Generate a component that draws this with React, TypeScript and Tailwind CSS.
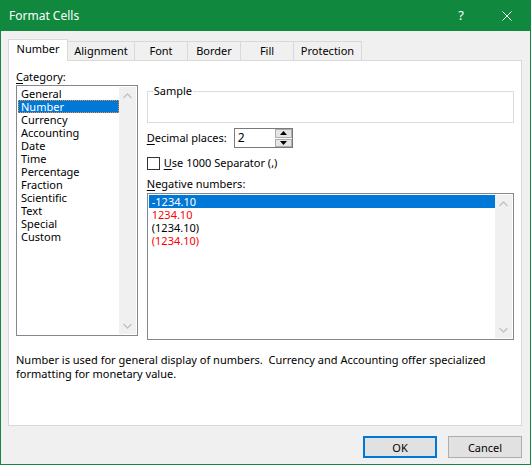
import React from 'react';

const categories = [
  'General',
  'Number',
  'Currency',
  'Accounting',
  'Date',
  'Time',
  'Percentage',
  'Fraction',
  'Scientific',
  'Text',
  'Special',
  'Custom',
];

const negatives = [
  { label: '-1234.10', red: false },
  { label: '1234.10', red: true },
  { label: '(1234.10)', red: false },
  { label: '(1234.10)', red: true },
];

const tabs = [
  { name: 'Number', w: 'w-[60px]' },
  { name: 'Alignment', w: 'w-[68px]' },
  { name: 'Font', w: 'w-[54px]' },
  { name: 'Border', w: 'w-[54px]' },
  { name: 'Fill', w: 'w-[54px]' },
  { name: 'Protection', w: 'w-[69px]' },
];

const Chevron: React.FC<{ down?: boolean }> = ({ down }) => (
  <svg width="9" height="6" viewBox="0 0 9 6" className="block">
    <path
      d={down ? 'M0.5 1 L4.5 5 L8.5 1' : 'M0.5 5 L4.5 1 L8.5 5'}
      fill="none"
      stroke="#c2c2c2"
      strokeWidth="1.3"
    />
  </svg>
);

const ScrollBar: React.FC = () => (
  <div className="w-[17px] h-full bg-[#f0f0f0] flex flex-col justify-between">
    <div className="h-[17px] flex items-center justify-center">
      <Chevron />
    </div>
    <div className="h-[17px] flex items-center justify-center">
      <Chevron down />
    </div>
  </div>
);

const App: React.FC = () => {
  const [category, setCategory] = React.useState('Number');
  const [negative, setNegative] = React.useState(0);
  const [decimals, setDecimals] = React.useState(2);
  const [separator, setSeparator] = React.useState(false);

  return (
    <div
      className="w-[531px] h-[465px] bg-[#f0f0f0] border-x border-b border-[#10893e] flex flex-col text-[11px] text-black select-none"
      style={{ fontFamily: '"Noto Sans", "Open Sans", sans-serif' }}
    >
      {/* Title bar */}
      <div className="h-[31px] bg-[#10893e] flex items-center pl-[8px] text-white shrink-0">
        <span className="flex-1 text-[12px]">Format Cells</span>
        <span className="w-[20px] text-center text-[13px] mr-[31px]">?</span>
        <svg width="10" height="10" viewBox="0 0 10 10" className="mr-[18px]">
          <path d="M0.5 0.5 L9.5 9.5 M9.5 0.5 L0.5 9.5" stroke="white" strokeWidth="1" />
        </svg>
      </div>

      {/* Tabs */}
      <div className="flex items-end pl-[7px] mt-[8px] h-[21px]">
        {tabs.map((t) =>
          t.name === 'Number' ? (
            <div
              key={t.name}
              className={`${t.w} h-[22px] -mb-[1px] bg-white border-x border-t border-[#d9d9d9] flex items-center justify-center pb-[2px] relative z-10`}
            >
              {t.name}
            </div>
          ) : (
            <div
              key={t.name}
              className={`${t.w} h-[19px] -ml-[1px] border border-b-0 border-[#d9d9d9] bg-[#f0f0f0] flex items-center justify-center`}
            >
              {t.name}
            </div>
          )
        )}
      </div>

      {/* Panel */}
      <div className="ml-[7px] w-[514px] h-[366px] bg-white border border-[#d9d9d9] pl-[7px] pr-[7px] pt-[8px] flex flex-col">
        <div className="flex">
          {/* Category */}
          <div className="w-[122px] flex flex-col">
            <div className="h-[16px] leading-[16px]">
              <span className="underline underline-offset-2">C</span>ategory:
            </div>
            <div className="h-[251px] border border-[#828790] p-[1px] flex">
              <div className="flex-1">
                {categories.map((c) => (
                  <div
                    key={c}
                    onClick={() => setCategory(c)}
                    className={`h-[13px] leading-[11px] pl-[2px] ${
                      c === category
                        ? 'bg-[#0078d7] text-white border border-dotted border-[#ff8728]'
                        : 'border border-transparent'
                    }`}
                  >
                    {c}
                  </div>
                ))}
              </div>
              <ScrollBar />
            </div>
          </div>

          {/* Right column */}
          <div className="w-[368px] ml-[9px] flex flex-col">
            <div className="mt-[22px] h-[32px] border border-[#dcdcdc] relative">
              <span className="absolute left-[5px] -top-[9px] bg-white px-[1px] leading-[16px]">Sample</span>
            </div>

            <div className="mt-[5px] flex items-center h-[20px]">
              <div className="w-[87px]">
                <span className="underline underline-offset-2">D</span>ecimal places:
              </div>
              <div className="w-[59px] h-[20px] border border-[#7a7a7a] flex items-center pl-[3px]">
                <span className="flex-1 text-[12px]">{decimals}</span>
                <div className="w-[17px] h-full flex flex-col gap-[1px]">
                  <div
                    onClick={() => setDecimals((d) => Math.min(30, d + 1))}
                    className="flex-1 bg-[#e5e5e5] border border-[#adadad] flex items-center justify-center"
                  >
                    <svg width="7" height="4" viewBox="0 0 7 4">
                      <path d="M0 4 L3.5 0 L7 4 Z" fill="#000" />
                    </svg>
                  </div>
                  <div
                    onClick={() => setDecimals((d) => Math.max(0, d - 1))}
                    className="flex-1 bg-[#e5e5e5] border border-[#adadad] flex items-center justify-center"
                  >
                    <svg width="7" height="4" viewBox="0 0 7 4">
                      <path d="M0 0 L7 0 L3.5 4 Z" fill="#000" />
                    </svg>
                  </div>
                </div>
              </div>
            </div>

            <div className="mt-[9px] flex items-center h-[13px]" onClick={() => setSeparator(!separator)}>
              <div className="w-[13px] h-[13px] border border-[#333] bg-white flex items-center justify-center">
                {separator && (
                  <svg width="9" height="9" viewBox="0 0 9 9">
                    <path d="M1 4.5 L3.5 7 L8 1.5" fill="none" stroke="#000" strokeWidth="1.4" />
                  </svg>
                )}
              </div>
              <span className="ml-[4px]">
                <span className="underline underline-offset-2">U</span>se 1000 Separator (,)
              </span>
            </div>

            <div className="mt-[6px] h-[16px] leading-[16px]">
              <span className="underline underline-offset-2">N</span>egative numbers:
            </div>
            <div className="mt-[1px] h-[147px] border border-[#828790] p-[1px] flex">
              <div className="flex-1">
                {negatives.map((n, i) => (
                  <div
                    key={i}
                    onClick={() => setNegative(i)}
                    className={`h-[13px] leading-[13px] pl-[3px] ${
                      i === negative ? 'bg-[#0078d7] text-white' : n.red ? 'text-[#ff0000]' : ''
                    }`}
                  >
                    {n.label}
                  </div>
                ))}
              </div>
              <ScrollBar />
            </div>
          </div>
        </div>

        <p className="mt-[13px] leading-[14px]">
          Number is used for general display of numbers.&nbsp; Currency and Accounting offer specialized
          <br />
          formatting for monetary value.
        </p>
      </div>

      {/* Buttons */}
      <div className="flex justify-end gap-[11px] pr-[8px] mt-[10px]">
        <button className="w-[74px] h-[22px] bg-[#e1e1e1] border-2 border-[#0078d7] leading-none">OK</button>
        <button className="w-[74px] h-[22px] bg-[#e1e1e1] border border-[#adadad] leading-none">Cancel</button>
      </div>
    </div>
  );
};

export default App;
